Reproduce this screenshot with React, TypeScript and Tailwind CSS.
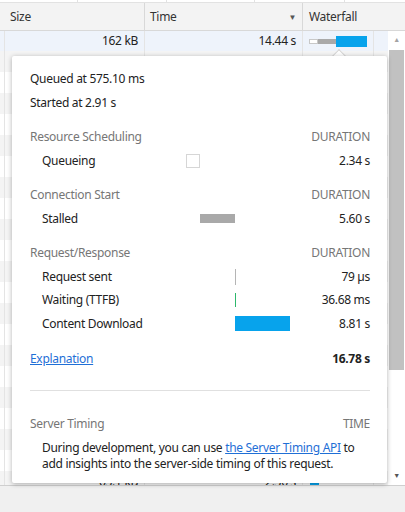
import React from "react";

type Phase = {
  label: string;
  value: string;
  bar: React.ReactNode;
};

type Section = {
  title: string;
  phases: Phase[];
};

const sections: Section[] = [
  {
    title: "Resource Scheduling",
    phases: [
      {
        label: "Queueing",
        value: "2.34 s",
        bar: <div className="h-[14px] w-[14px] border border-[#d6d6d6] bg-white" />,
      },
    ],
  },
  {
    title: "Connection Start",
    phases: [
      {
        label: "Stalled",
        value: "5.60 s",
        bar: <div className="ml-[14px] h-[9px] w-[35px] bg-[#a9a9a9]" />,
      },
    ],
  },
  {
    title: "Request/Response",
    phases: [
      {
        label: "Request sent",
        value: "79 µs",
        bar: <div className="ml-[49px] h-[16px] w-px bg-[#b5b5b5]" />,
      },
      {
        label: "Waiting (TTFB)",
        value: "36.68 ms",
        bar: <div className="ml-[49px] h-[14px] w-px bg-[#2db86c]" />,
      },
      {
        label: "Content Download",
        value: "8.81 s",
        bar: <div className="ml-[49px] h-[15px] w-[55px] bg-[#07a3ec]" />,
      },
    ],
  },
];

// rows of the request table; the ones under the popover are left blank
const rows: { size: string; time: string; selected?: boolean }[] = [
  { size: "162 kB", time: "14.44 s", selected: true },
  ...Array.from({ length: 20 }, () => ({ size: "", time: "" })),
  { size: "63.1 kB", time: "2.36 s" },
];

const PhaseRow = ({ phase }: { phase: Phase }) => (
  <div className="flex h-[23.5px] items-center pl-3">
    <div className="w-[144px]">{phase.label}</div>
    <div className="flex w-[104px] items-center">{phase.bar}</div>
    <div className="flex-1 text-right">{phase.value}</div>
  </div>
);

const HeadRow = ({ left, right }: { left: string; right: string }) => (
  <div className="flex h-[23.5px] items-center justify-between text-[#767676]">
    <span>{left}</span>
    <span>{right}</span>
  </div>
);

const App = () => {
  const last = rows.length - 1;
  return (
    <div
      className="relative flex h-[512px] w-[405px] flex-col overflow-hidden bg-white text-[12px] tracking-[-0.3px] text-[#222]"
      style={{ fontFamily: '"Noto Sans", "Open Sans", sans-serif' }}
    >
      {/* strip of the row above the header */}
      <div className="flex h-[3px] border-b border-[#e2e2e2]">
        <div className="w-[78px] border-r border-[#e2e2e2]" />
        <div className="w-[89px] border-r border-[#e2e2e2]" />
        <div className="w-[88px] border-r border-[#e2e2e2]" />
        <div className="w-[90px] border-r border-[#e2e2e2]" />
      </div>

      {/* header */}
      <div className="flex h-[28px] shrink-0 items-center border-b border-[#d8d8d8] bg-[#f3f3f3] text-[#333]">
        <div className="flex h-full w-[145px] items-center border-r border-[#d8d8d8] pl-[10px]">Size</div>
        <div className="flex h-full w-[158px] items-center justify-between border-r border-[#d8d8d8] pl-[5px] pr-[6px]">
          <span>Time</span>
          <span className="text-[8px] text-[#555]">▼</span>
        </div>
        <div className="flex h-full flex-1 items-center pl-[6px]">Waterfall</div>
      </div>

      {/* body */}
      <div className="flex min-h-0 flex-1">
        <div className="flex-1 overflow-hidden">
          {rows.map((r, i) => (
            <div
              key={i}
              className={
                r.selected
                  ? "flex h-[20px] items-center bg-[#eef3fb]"
                  : i % 2 === 1
                    ? "flex h-[21px] items-center bg-[#f4f4f4]"
                    : "flex h-[21px] items-center bg-white"
              }
            >
              <div className="h-full w-[5px] border-r border-[#e4e4e4]" />
              <div className="flex h-full w-[140px] items-center justify-end border-r border-[#e4e4e4] pr-[6px]">
                {r.size}
              </div>
              <div className="flex h-full w-[158px] items-center justify-end border-r border-[#e4e4e4] pr-[6px]">
                {r.time}
              </div>
              <div className="flex h-full w-[71px] items-center border-r border-[#e4e4e4] pl-[6px]">
                {r.selected && (
                  <div className="flex items-center">
                    <div className="h-[5px] w-[9px] border border-[#c8c8c8] bg-white" />
                    <div className="h-[5px] w-[18px] bg-[#a9a9a9]" />
                    <div className="h-[11px] w-[31px] bg-[#07a3ec]" />
                  </div>
                )}
                {i === last && <div className="ml-[1px] h-[7px] w-[9px] bg-[#07a3ec]" />}
              </div>
            </div>
          ))}
        </div>

        {/* scrollbar */}
        <div className="flex w-[17px] flex-col items-center bg-white">
          <div className="flex h-[19px] items-center text-[7px] text-[#a3a3a3]">▲</div>
          <div className="h-[320px] w-[15px] bg-[#c1c1c1]" />
          <div className="flex-1" />
          <div className="flex h-[17px] items-center text-[7px] text-[#555]">▼</div>
        </div>
      </div>

      {/* status bar */}
      <div className="h-[27px] shrink-0 border-t border-[#cfcfcf] bg-[#f0f0f0]" />

      {/* popover pointer */}
      <div className="absolute left-[334px] top-[51px] h-[10px] w-[10px] rotate-45 border-l border-t border-[#d4d4d4] bg-white" />

      {/* popover */}
      <div className="absolute left-[12px] top-[56px] flex h-[427px] w-[375px] flex-col rounded-[2px] bg-white pl-[18px] pr-[17px] pt-[11.5px] shadow-[0_1px_5px_rgba(0,0,0,0.3)]">
        <div className="flex h-[23.5px] items-center">Queued at 575.10 ms</div>
        <div className="flex h-[23.5px] items-center">Started at 2.91 s</div>

        {sections.map((s) => (
          <div key={s.title} className="mt-[11px]">
            <HeadRow left={s.title} right="DURATION" />
            {s.phases.map((p) => (
              <PhaseRow key={p.label} phase={p} />
            ))}
          </div>
        ))}

        <div className="mt-[11.5px] flex h-[23.5px] items-center justify-between">
          <a className="text-[#1f6fd6] underline">Explanation</a>
          <span className="font-bold">16.78 s</span>
        </div>

        <div className="mt-[19px] h-px bg-[#e0e0e0]" />

        <div className="mt-[21.5px]">
          <HeadRow left="Server Timing" right="TIME" />
        </div>
        <p className="mt-[4.5px] pl-3 leading-[16px]">
          During development, you can use{" "}
          <a className="text-[#1f6fd6] underline">the Server Timing API</a> to
          add insights into the server-side timing of this request.
        </p>
      </div>
    </div>
  );
};

export default App;
